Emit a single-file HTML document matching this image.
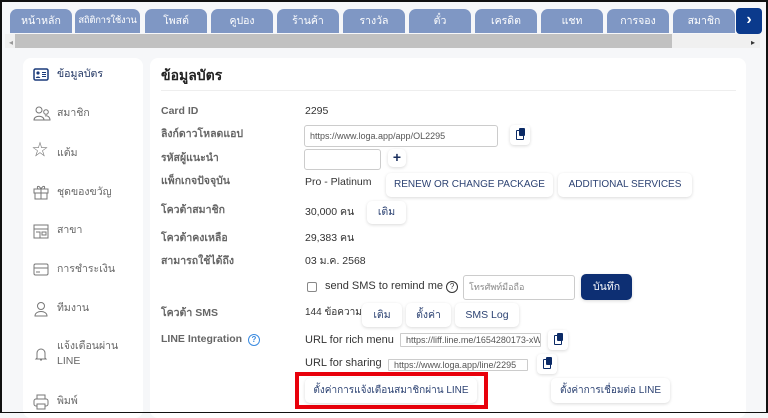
<!DOCTYPE html><html><head><meta charset="utf-8"><style>
*{box-sizing:border-box;margin:0;padding:0}
body{width:768px;height:413px;overflow:hidden;background:#f6f7f9;font-family:"Liberation Sans","Noto Sans CJK SC",sans-serif;position:relative;color:#333;line-height:14px}
.frame{position:absolute;left:0;top:0;width:768px;height:413px;border:2px solid #111;border-bottom:1px solid #111;z-index:10;pointer-events:none}
.tab{position:absolute;top:9px;height:24px;width:62px;background:#7f97c4;border-radius:7px 7px 0 0;color:#fff;font-size:10.5px;text-align:center;line-height:24px;white-space:nowrap;overflow:hidden}
.arrow{position:absolute;left:736px;top:8px;width:26px;height:26px;background:#0b3a8c;border-radius:4px;color:#fff;font-size:16px;text-align:center;line-height:24px;font-weight:bold}
.sbar{position:absolute;left:15px;top:34px;width:657px;height:14px;background:#c1c1c1}
.strack{position:absolute;left:5px;top:34px;width:755px;height:14px;background:#f0f0f0}
.card{position:absolute;background:#fff;border-radius:8px}
.si{position:absolute;left:33px;font-size:10.5px;color:#666}
.si span{position:absolute;left:24px;top:0;white-space:nowrap}
.lbl{position:absolute;left:161px;font-size:10.5px;font-weight:bold;color:#666;white-space:nowrap}
.val{position:absolute;font-size:10.5px;color:#333;white-space:nowrap}
.btn{position:absolute;background:#fff;border-radius:5px;box-shadow:0 1px 3px rgba(0,0,0,.15);font-size:10.5px;color:#2d4373;text-align:center;white-space:nowrap}
.inp{position:absolute;border:1px solid #ccc;border-radius:3px;background:#fff;font-size:9px;color:#555;padding-left:5px;white-space:nowrap;overflow:hidden}
.copy{position:absolute;width:20px;height:20px;background:#fff;border-radius:4px;box-shadow:0 1px 3px rgba(0,0,0,.15)}
.copy:before{content:"";position:absolute;left:6px;top:5px;width:6px;height:8px;border:1.5px solid #0b2a66;border-radius:1px;background:#fff}
.copy:after{content:"";position:absolute;left:9px;top:3px;width:6px;height:8px;background:#0b2a66;border-radius:1px}
</style></head><body>
<div class="strack"></div><div class="sbar"></div>
<div style="position:absolute;left:9px;top:36px;font-size:8px;color:#999">◂</div>
<div style="position:absolute;left:751px;top:36px;font-size:8px;color:#333">▸</div>
<div class="tab" style="left:10px">หน้าหลัก</div>
<div class="tab" style="left:75px;width:65px;font-size:9.5px;letter-spacing:-0.3px">สถิติการใช้งาน</div>
<div class="tab" style="left:145px">โพสต์</div>
<div class="tab" style="left:211px">คูปอง</div>
<div class="tab" style="left:277px">ร้านค้า</div>
<div class="tab" style="left:343px">รางวัล</div>
<div class="tab" style="left:409px">ตั๋ว</div>
<div class="tab" style="left:475px">เครดิต</div>
<div class="tab" style="left:541px">แชท</div>
<div class="tab" style="left:607px">การจอง</div>
<div class="tab" style="left:673px">สมาชิก</div>
<div class="tab" style="left:739px;width:20px;text-align:left;padding-left:2px">ร</div>
<div class="arrow">›</div>

<div class="card" style="left:23px;top:58px;width:120px;height:360px"></div>
<div class="card" style="left:150px;top:58px;width:596px;height:360px"></div>

<div class="si" style="top:67px;color:#1a2f5e"><svg width="16" height="13" viewBox="0 0 16 13" style="position:absolute;left:0;top:1px"><rect x="1" y="1" width="14" height="11" rx="1.5" fill="none" stroke="#1a3a7a" stroke-width="1.5"/><circle cx="5" cy="5" r="1.6" fill="#1a3a7a"/><path d="M2.8 10c0-2 4.4-2 4.4 0" fill="#1a3a7a"/><path d="M9 4.5h4M9 6.5h4M9 8.5h4" stroke="#1a3a7a"/></svg><span>ข้อมูลบัตร</span></div>
<div class="si" style="top:106px"><svg width="18" height="16" style="position:absolute;left:0;top:0"><circle cx="6" cy="4" r="3" fill="none" stroke="#777"/><path d="M1 14c0-5 10-5 10 0z" fill="none" stroke="#777"/><circle cx="13" cy="6" r="2.3" fill="none" stroke="#777"/><path d="M11 14h6c0-3-3-5-5-4" fill="none" stroke="#777"/></svg><span>สมาชิก</span></div>
<div class="si" style="top:146px"><span style="left:-1px;font-size:16px;top:-2px;color:#777">☆</span><span>แต้ม</span></div>
<div class="si" style="top:185px"><svg width="16" height="16" style="position:absolute;left:0;top:-1px"><rect x="1" y="5" width="14" height="4" fill="none" stroke="#777"/><rect x="2" y="9" width="12" height="6" fill="none" stroke="#777"/><path d="M8 5v10M8 5C6 1 3 2 5 5M8 5c2-4 5-3 3 0" fill="none" stroke="#777"/></svg><span>ชุดของขวัญ</span></div>
<div class="si" style="top:223px"><svg width="16" height="16" style="position:absolute;left:0;top:0"><rect x="1" y="2" width="14" height="13" fill="none" stroke="#777"/><path d="M1 6h14M3 9h4v6M9 9h4v3H9z" fill="none" stroke="#777"/></svg><span>สาขา</span></div>
<div class="si" style="top:262px"><svg width="16" height="14" style="position:absolute;left:0;top:0"><rect x="1" y="2" width="14" height="11" rx="1.5" fill="none" stroke="#777"/><path d="M1 6h14M3 10h4" stroke="#777"/></svg><span>การชำระเงิน</span></div>
<div class="si" style="top:301px"><svg width="16" height="16" style="position:absolute;left:0;top:0"><circle cx="8" cy="5" r="3.5" fill="none" stroke="#777"/><path d="M2 15c0-6 12-6 12 0z" fill="none" stroke="#777"/></svg><span>ทีมงาน</span></div>
<div class="si" style="top:339px"><svg width="16" height="16" style="position:absolute;left:0;top:7px"><path d="M4 12V7a4 4 0 0 1 8 0v5l1 1H3z M7 14h2" fill="none" stroke="#777"/></svg><span style="line-height:15px">แจ้งเตือนผ่าน<br>LINE</span></div>
<div class="si" style="top:394px"><svg width="16" height="16" style="position:absolute;left:0;top:0"><rect x="4" y="1" width="8" height="4" fill="none" stroke="#777"/><rect x="1" y="5" width="14" height="7" rx="2" fill="none" stroke="#777"/><rect x="4" y="10" width="8" height="5" fill="#fff" stroke="#777"/></svg><span>พิมพ์</span></div>

<div style="position:absolute;left:161px;top:66px;font-size:14px;line-height:18px;font-weight:bold;color:#222">ข้อมูลบัตร</div>
<div style="position:absolute;left:161px;top:90px;width:575px;height:1px;background:#eee"></div>

<div class="lbl" style="top:104px">Card ID</div>
<div class="lbl" style="top:127px">ลิงก์ดาวโหลดแอป</div>
<div class="lbl" style="top:151px">รหัสผู้แนะนำ</div>
<div class="lbl" style="top:174px">แพ็กเกจปัจจุบัน</div>
<div class="lbl" style="top:203px">โควต้าสมาชิก</div>
<div class="lbl" style="top:231px">โควต้าคงเหลือ</div>
<div class="lbl" style="top:254px">สามารถใช้ได้ถึง</div>
<div class="lbl" style="top:306px">โควต้า SMS</div>
<div class="lbl" style="top:332px">LINE Integration <span style="display:inline-block;width:12px;height:12px;border:1.3px solid #3b8be0;border-radius:50%;color:#3b8be0;font-size:8px;text-align:center;line-height:10px;margin-left:3px">?</span></div>

<div class="val" style="left:305px;top:104px">2295</div>
<div class="inp" style="left:304px;top:125px;width:194px;height:22px;line-height:20px">https://www.loga.app/app/OL2295</div>
<div class="copy" style="left:510px;top:125px"></div>
<div class="inp" style="left:304px;top:149px;width:77px;height:21px"></div>
<div class="btn" style="left:388px;top:149px;width:18px;height:18px;line-height:17px;font-size:14px;color:#1a2f5e;font-weight:bold">+</div>
<div class="val" style="left:305px;top:175px">Pro - Platinum</div>
<div class="btn" style="left:386px;top:173px;width:167px;height:24px;line-height:24px;font-size:10px">RENEW OR CHANGE PACKAGE</div>
<div class="btn" style="left:558px;top:173px;width:134px;height:24px;line-height:24px;font-size:10px">ADDITIONAL SERVICES</div>
<div class="val" style="left:305px;top:205px">30,000 คน</div>
<div class="btn" style="left:367px;top:201px;width:39px;height:23px;line-height:23px">เติม</div>
<div class="val" style="left:305px;top:231px">29,383 คน</div>
<div class="val" style="left:305px;top:254px">03 ม.ค. 2568</div>
<div style="position:absolute;left:307px;top:282px;width:10px;height:10px;border:1px solid #888;border-radius:2px;background:#fff"></div>
<div class="val" style="left:325px;top:279px;font-size:11px">send SMS to remind me <span style="display:inline-block;width:12px;height:12px;border:1.3px solid #333;border-radius:50%;font-size:8px;text-align:center;line-height:10px">?</span></div>
<div class="inp" style="left:463px;top:275px;width:112px;height:25px;line-height:23px;font-size:9px;color:#888">โทรศัพท์มือถือ</div>
<div class="btn" style="left:581px;top:274px;width:51px;height:26px;line-height:26px;background:#0d2f73;color:#fff">บันทึก</div>
<div class="val" style="left:305px;top:306px;font-size:10px">144 ข้อความ</div>
<div class="btn" style="left:362px;top:303px;width:40px;height:24px;line-height:24px">เติม</div>
<div class="btn" style="left:406px;top:303px;width:45px;height:24px;line-height:24px">ตั้งค่า</div>
<div class="btn" style="left:455px;top:303px;width:64px;height:24px;line-height:24px">SMS Log</div>
<div class="val" style="left:305px;top:333px;font-size:11px">URL for rich menu</div>
<div class="inp" style="left:400px;top:333px;width:141px;height:14px;line-height:12px;border-radius:1px">https://liff.line.me/1654280173-xW</div>
<div class="copy" style="left:548px;top:330px"></div>
<div class="val" style="left:305px;top:356px;font-size:11px">URL for sharing</div>
<div class="inp" style="left:388px;top:359px;width:140px;height:12px;line-height:10px;border-radius:1px">https://www.loga.app/line/2295</div>
<div class="copy" style="left:537px;top:354px"></div>
<div style="position:absolute;left:295px;top:372px;width:193px;height:37px;border:4px solid #e8000b"></div>
<div class="btn" style="left:305px;top:378px;width:172px;height:25px;line-height:25px;font-size:10px">ตั้งค่าการแจ้งเตือนสมาชิกผ่าน LINE</div>
<div class="btn" style="left:551px;top:378px;width:119px;height:25px;line-height:25px;font-size:10px">ตั้งค่าการเชื่อมต่อ LINE</div>
<div class="frame"></div>
</body></html>
